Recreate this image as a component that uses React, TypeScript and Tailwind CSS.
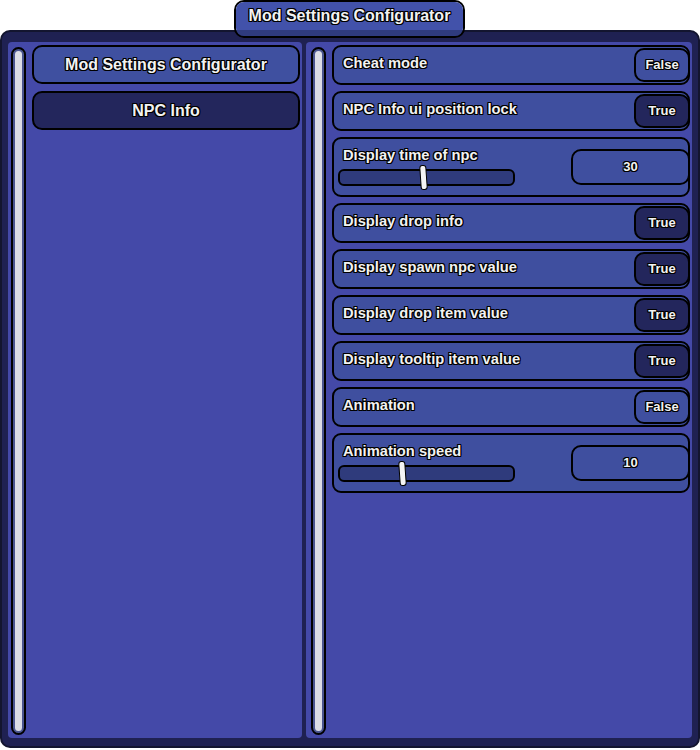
import React from "react";

const outline =
  "[text-shadow:-1px_-1px_0_#000,1px_-1px_0_#000,-1px_1px_0_#000,1px_1px_0_#000,0_1px_0_#000,0_-1px_0_#000,1px_0_0_#000,-1px_0_0_#000]";

type Row =
  | { kind: "toggle"; label: string; value: boolean }
  | { kind: "slider"; label: string; value: number; knob: number };

const rows: Row[] = [
  { kind: "toggle", label: "Cheat mode", value: false },
  { kind: "toggle", label: "NPC Info ui position lock", value: true },
  { kind: "slider", label: "Display time of npc", value: 30, knob: 80 },
  { kind: "toggle", label: "Display drop info", value: true },
  { kind: "toggle", label: "Display spawn npc value", value: true },
  { kind: "toggle", label: "Display drop item value", value: true },
  { kind: "toggle", label: "Display tooltip item value", value: true },
  { kind: "toggle", label: "Animation", value: false },
  { kind: "slider", label: "Animation speed", value: 10, knob: 59 },
];

function Scrollbar() {
  return (
    <div className="w-[15px] shrink-0 self-stretch mt-[2px] rounded-full border-2 border-black bg-[#4a5590] p-[2px]">
      <div className="h-full w-full rounded-full bg-[#dcdde6]" />
    </div>
  );
}

export default function App() {
  return (
    <div
      className="relative w-[700px] h-[750px] bg-white pt-[30px] text-[#f2f2f2] font-bold"
      style={{ fontFamily: '"Liberation Sans", Arial, sans-serif' }}
    >
      <div className="h-[718px] rounded-[10px] border-2 border-[#13152f] bg-[#1f2152] px-[6px] pt-[10px] pb-[8px] flex gap-[4px]">
        {/* Left panel */}
        <div className="w-[294px] h-full bg-[#4449a8] rounded-[4px] flex gap-[6px] pl-[3px] pr-[2px] pt-[3px] pb-[3px]">
          <Scrollbar />
          <div className="flex-1 flex flex-col gap-[7px]">
            <div
              className={`h-[39px] rounded-[10px] border-2 border-black bg-[#3f50a0] flex items-center justify-center text-[16px] ${outline}`}
            >
              Mod Settings Configurator
            </div>
            <div
              className={`h-[39px] rounded-[10px] border-2 border-black bg-[#23265c] flex items-center justify-center text-[16px] ${outline}`}
            >
              NPC Info
            </div>
          </div>
        </div>
        {/* Right panel */}
        <div className="w-[386px] h-full bg-[#4449a8] rounded-[4px] flex gap-[6px] pl-[5px] pr-[2px] pt-[3px] pb-[3px]">
          <Scrollbar />
          <div className="flex-1 flex flex-col gap-[6px]">
            {rows.map((r, i) =>
              r.kind === "toggle" ? (
                <div
                  key={i}
                  className="h-[40px] rounded-[9px] border-2 border-black bg-[#3f4f9f] flex justify-between"
                >
                  <div className={`pl-[9px] pt-[6px] text-[14.7px] leading-[20px] ${outline}`}>
                    {r.label}
                  </div>
                  <div
                    className={`mt-[1px] -mr-[2px] h-[34px] w-[56px] rounded-[10px] border-2 border-black flex items-center justify-center text-[13px] ${outline} ${
                      r.value ? "bg-[#23265c]" : "bg-[#3f4f9f]"
                    }`}
                  >
                    {r.value ? "True" : "False"}
                  </div>
                </div>
              ) : (
                <div
                  key={i}
                  className="h-[60px] rounded-[9px] border-2 border-black bg-[#3f4f9f] flex justify-between items-center"
                >
                  <div className="self-start flex flex-col">
                    <div className={`pl-[9px] pt-[6px] text-[14.7px] leading-[20px] ${outline}`}>
                      {r.label}
                    </div>
                    <div className="relative ml-[4px] mt-[4px] w-[177px] h-[17px] rounded-[6px] border-2 border-black bg-[#2f3b7c]">
                      <div
                        className="absolute top-[-6px] w-[7px] h-[25px] rounded-[3px] border border-black bg-[#f4f4f4] rotate-[-4deg]"
                        style={{ left: r.knob }}
                      />
                    </div>
                  </div>
                  <div
                    className={`-mr-[2px] w-[119px] h-[36px] rounded-[10px] border-2 border-black bg-[#3f4f9f] flex items-center justify-center text-[13px] ${outline}`}
                  >
                    {r.value}
                  </div>
                </div>
              )
            )}
          </div>
        </div>
      </div>
      {/* Title tab */}
      <div className="absolute left-[234px] top-0 w-[231px] h-[38px] rounded-[10px] border-2 border-black overflow-hidden flex flex-col">
        <div className={`flex-1 bg-[#4252aa] flex items-center justify-center text-[16px] pb-[1px] ${outline}`}>
          Mod Settings Configurator
        </div>
        <div className="h-[6px] bg-[#2f3b7e]" />
      </div>
    </div>
  );
}
